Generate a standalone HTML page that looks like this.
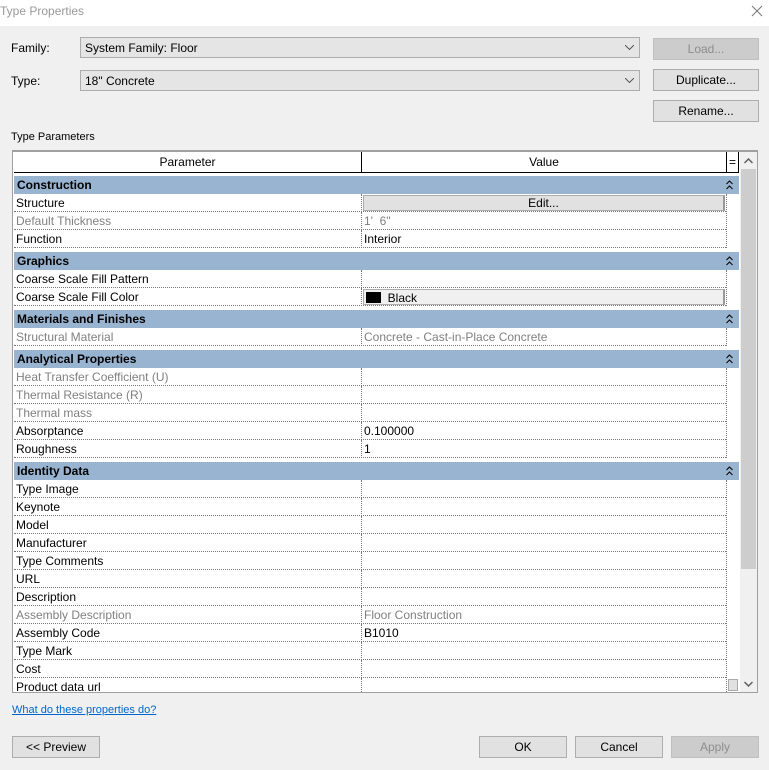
<!DOCTYPE html>
<html><head><meta charset="utf-8"><style>
*{box-sizing:border-box;margin:0;padding:0}
body{width:769px;height:770px;background:#f0f0f0;font-family:"Liberation Sans",sans-serif;font-size:12px;color:#000;position:relative;overflow:hidden}
.a{position:absolute}
.title{left:0;top:0;width:769px;height:26px;background:#fff}
.combo{background:#e5e5e5;border:1px solid #adadad;height:21px;padding:3px 0 0 4px}
.btn{background:#e1e1e1;border:1px solid #adadad;text-align:center;padding-top:3px;height:22px}
.dis{background:#cccccc;border-color:#bfbfbf;color:#8d8d8d}
.grid{left:12px;top:150px;width:746px;height:543px;background:#fff;border:1px solid #a0a0a0;border-top:2px solid #a0a0a0}
.band{left:14px;width:725px;height:18px;background:#99b4d1;font-weight:bold;padding:2px 0 0 3px}
.band svg{position:absolute;right:6px;top:4px}
.row{left:14px;width:712px;height:18px;border-bottom:1px dotted #777;padding:2px 0 0 2px}
.row .v{position:absolute;left:347px;top:0;height:18px;border-left:1px dotted #777;padding:2px 0 0 2px;width:365px}
.g{color:#808080}
.ec{left:726px;width:13px;height:18px;border-left:1px dotted #777;border-bottom:1px dotted #777}
</style></head><body>
<div class="a title"></div>
<div class="a" style="left:0;top:4px;color:#999;font-size:12px">Type Properties</div>
<svg class="a" style="left:751px;top:5px" width="12" height="12"><path d="M1 1L11 11M11 1L1 11" stroke="#777" stroke-width="1"/></svg>

<div class="a" style="left:11px;top:41px">Family:</div>
<div class="a combo" style="left:80px;top:37px;width:560px">System Family: Floor<svg style="position:absolute;right:5px;top:7px" width="9" height="5"><path d="M0 0L4.5 4.5L9 0" stroke="#555" fill="none"/></svg></div>
<div class="a btn dis" style="left:653px;top:38px;width:106px">Load...</div>
<div class="a" style="left:11px;top:74px">Type:</div>
<div class="a combo" style="left:80px;top:70px;width:560px">18" Concrete<svg style="position:absolute;right:5px;top:7px" width="9" height="5"><path d="M0 0L4.5 4.5L9 0" stroke="#555" fill="none"/></svg></div>
<div class="a btn" style="left:653px;top:69px;width:106px">Duplicate...</div>
<div class="a btn" style="left:653px;top:100px;width:106px">Rename...</div>
<div class="a" style="left:11px;top:131px;font-size:11px">Type Parameters</div>

<div class="a grid"></div>
<div class="a" style="left:14px;top:152px;width:713px;height:21px;border-bottom:1px solid #000;background:#fff"></div>
<div class="a" style="left:14px;top:155px;width:347px;text-align:center">Parameter</div>
<div class="a" style="left:361px;top:152px;width:1px;height:21px;background:#000"></div>
<div class="a" style="left:362px;top:155px;width:364px;text-align:center">Value</div>
<div class="a" style="left:726px;top:152px;width:13px;height:21px;border-left:1px solid #000;border-right:1px solid #000;border-bottom:1px solid #000;text-align:center;padding-top:3px">=</div>
<div class="a" style="left:740px;top:152px;width:17px;height:540px;background:#f0f0f0"></div>
<div class="a" style="left:741px;top:169px;width:15px;height:400px;background:#cdcdcd"></div>
<svg class="a" style="left:744px;top:158px" width="9" height="6"><path d="M0.5 5L4.5 1L8.5 5" stroke="#606060" stroke-width="1.5" fill="none"/></svg>
<svg class="a" style="left:744px;top:681px" width="9" height="6"><path d="M0.5 1L4.5 5L8.5 1" stroke="#606060" stroke-width="1.5" fill="none"/></svg>

<div class="a band" style="top:176px">Construction<svg width="7" height="10"><path d="M0.5 4L3.5 1L6.5 4M0.5 9L3.5 6L6.5 9" stroke="#000" fill="none"/></svg></div>
<div class="a row" style="top:194px">Structure<div class="v" style="padding:1px"><div style="background:#e1e1e1;border:1px solid #adadad;border-right:2px solid #999;height:16px;text-align:center">Edit...</div></div></div>
<div class="a row g" style="top:212px">Default Thickness<div class="v">1'&nbsp; 6"</div></div>
<div class="a row" style="top:230px">Function<div class="v">Interior</div></div>

<div class="a band" style="top:252px">Graphics<svg width="7" height="10"><path d="M0.5 4L3.5 1L6.5 4M0.5 9L3.5 6L6.5 9" stroke="#000" fill="none"/></svg></div>
<div class="a row" style="top:270px">Coarse Scale Fill Pattern<div class="v"></div></div>
<div class="a row" style="top:288px">Coarse Scale Fill Color<div class="v" style="padding:1px"><div style="background:#f0f0f0;border:1px solid #adadad;border-right:2px solid #999;height:16px;padding:1px 0 0 2px"><span style="display:inline-block;width:15px;height:11px;background:#000;vertical-align:-1px"></span>&nbsp; Black</div></div></div>

<div class="a band" style="top:310px">Materials and Finishes<svg width="7" height="10"><path d="M0.5 4L3.5 1L6.5 4M0.5 9L3.5 6L6.5 9" stroke="#000" fill="none"/></svg></div>
<div class="a row g" style="top:328px">Structural Material<div class="v">Concrete - Cast-in-Place Concrete</div></div>

<div class="a band" style="top:350px">Analytical Properties<svg width="7" height="10"><path d="M0.5 4L3.5 1L6.5 4M0.5 9L3.5 6L6.5 9" stroke="#000" fill="none"/></svg></div>
<div class="a row g" style="top:368px">Heat Transfer Coefficient (U)<div class="v"></div></div>
<div class="a row g" style="top:386px">Thermal Resistance (R)<div class="v"></div></div>
<div class="a row g" style="top:404px">Thermal mass<div class="v"></div></div>
<div class="a row" style="top:422px">Absorptance<div class="v">0.100000</div></div>
<div class="a row" style="top:440px">Roughness<div class="v">1</div></div>

<div class="a band" style="top:462px">Identity Data<svg width="7" height="10"><path d="M0.5 4L3.5 1L6.5 4M0.5 9L3.5 6L6.5 9" stroke="#000" fill="none"/></svg></div>
<div class="a row" style="top:480px">Type Image<div class="v"></div></div>
<div class="a row" style="top:498px">Keynote<div class="v"></div></div>
<div class="a row" style="top:516px">Model<div class="v"></div></div>
<div class="a row" style="top:534px">Manufacturer<div class="v"></div></div>
<div class="a row" style="top:552px">Type Comments<div class="v"></div></div>
<div class="a row" style="top:570px">URL<div class="v"></div></div>
<div class="a row" style="top:588px">Description<div class="v"></div></div>
<div class="a row g" style="top:606px">Assembly Description<div class="v">Floor Construction</div></div>
<div class="a row" style="top:624px">Assembly Code<div class="v">B1010</div></div>
<div class="a row" style="top:642px">Type Mark<div class="v"></div></div>
<div class="a row" style="top:660px">Cost<div class="v"></div></div>
<div class="a row" style="top:678px;height:14px;border-bottom:none;overflow:hidden">Product data url<div class="v" style="height:14px"></div></div>

<div class="a ec" style="top:194px;border-bottom:none;height:54px"></div>
<div class="a ec" style="top:270px;border-bottom:none;height:36px"></div>
<div class="a ec" style="top:328px;border-bottom:none;height:18px"></div>
<div class="a ec" style="top:368px;border-bottom:none;height:90px"></div>
<div class="a ec" style="top:480px;border-bottom:none;height:212px"></div>
<div class="a" style="left:728px;top:679px;width:10px;height:12px;background:#e1e1e1;border:1px solid #aaa"></div>

<div class="a" style="left:12px;top:704px;color:#0066cc;text-decoration:underline;font-size:11px">What do these properties do?</div>
<div class="a btn" style="left:12px;top:736px;width:88px">&lt;&lt; Preview</div>
<div class="a btn" style="left:479px;top:736px;width:88px">OK</div>
<div class="a btn" style="left:575px;top:736px;width:88px">Cancel</div>
<div class="a btn dis" style="left:671px;top:736px;width:88px">Apply</div>
</body></html>
